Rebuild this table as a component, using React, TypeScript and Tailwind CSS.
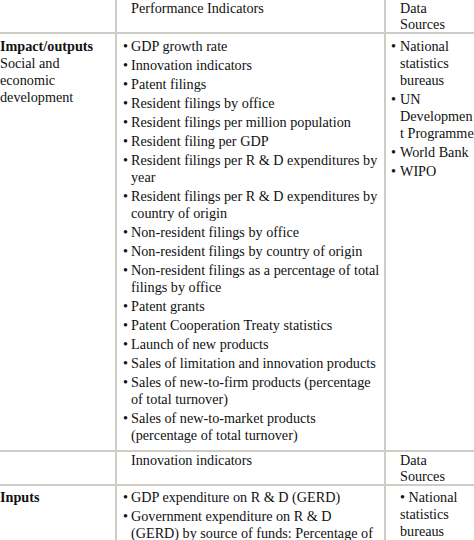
const perf = [
  'GDP growth rate',
  'Innovation indicators',
  'Patent filings',
  'Resident filings by office',
  'Resident filings per million population',
  'Resident filing per GDP',
  'Resident filings per R & D expenditures by year',
  'Resident filings per R & D expenditures by country of origin',
  'Non-resident filings by office',
  'Non-resident filings by country of origin',
  'Non-resident filings as a percentage of total filings by office',
  'Patent grants',
  'Patent Cooperation Treaty statistics',
  'Launch of new products',
  'Sales of limitation and innovation products',
  'Sales of new-to-firm products (percentage of total turnover)',
  'Sales of new-to-market products (percentage of total turnover)',
];

const sources = ['National statistics bureaus', 'UN Development Programme', 'World Bank', 'WIPO'];

const inputs = [
  'GDP expenditure on R & D (GERD)',
  'Government expenditure on R & D (GERD) by source of funds: Percentage of GDP',
];

function BulletList({ items, bulletWidth }: { items: string[]; bulletWidth: string }) {
  return (
    <ul className="flex flex-col gap-[2px]">
      {items.map((item) => (
        <li key={item} className="flex">
          <span className={`${bulletWidth} shrink-0`}>•</span>
          <span className="min-w-0 flex-1 break-words">{item}</span>
        </li>
      ))}
    </ul>
  );
}

export default function App() {
  return (
    <div
      className="w-[474px] h-[540px] overflow-hidden bg-white text-[14.2px] leading-[17px] text-[#111111]"
      style={{ fontFamily: '"Liberation Serif", "Times New Roman", serif' }}
    >
      <div className="grid w-[479px] grid-cols-[117px_269px_93px]">
        {/* Header row */}
        <div className="border-r-2 border-b-2 border-[#cdcdc5]" />
        <div className="border-r-2 border-b-2 border-[#cdcdc5] pl-[14px] leading-[16px]">
          Performance Indicators
        </div>
        <div className="border-b-2 border-[#cdcdc5] pl-[14px] leading-[16px]">
          Data
          <br />
          Sources
        </div>

        {/* Impact / outputs */}
        <div className="border-r-2 border-b-2 border-[#cdcdc5] pt-[4px] pr-[4px]">
          <div className="font-bold">Impact/outputs</div>
          <div>Social and economic development</div>
        </div>
        <div className="border-r-2 border-b-2 border-[#cdcdc5] pt-[4px] pb-[6px] pl-[6px] pr-[4px]">
          <BulletList items={perf} bulletWidth="w-[8px]" />
        </div>
        <div className="border-b-2 border-[#cdcdc5] pt-[4px] pl-[5px] pr-[5px]">
          <BulletList items={sources} bulletWidth="w-[9px]" />
        </div>

        {/* Innovation header row */}
        <div className="border-r-2 border-b-2 border-[#cdcdc5]" />
        <div className="border-r-2 border-b-2 border-[#cdcdc5] pl-[14px] leading-[16px]">
          Innovation indicators
        </div>
        <div className="border-b-2 border-[#cdcdc5] pl-[14px] leading-[16px]">
          Data
          <br />
          Sources
        </div>

        {/* Inputs */}
        <div className="border-r-2 border-[#cdcdc5] pt-[3px] font-bold">Inputs</div>
        <div className="border-r-2 border-[#cdcdc5] pt-[3px] pl-[6px] pr-[4px]">
          <BulletList items={inputs} bulletWidth="w-[8px]" />
        </div>
        <div className="pt-[3px] pl-[14px] pr-[5px]">• National statistics bureaus</div>
      </div>
    </div>
  );
}
